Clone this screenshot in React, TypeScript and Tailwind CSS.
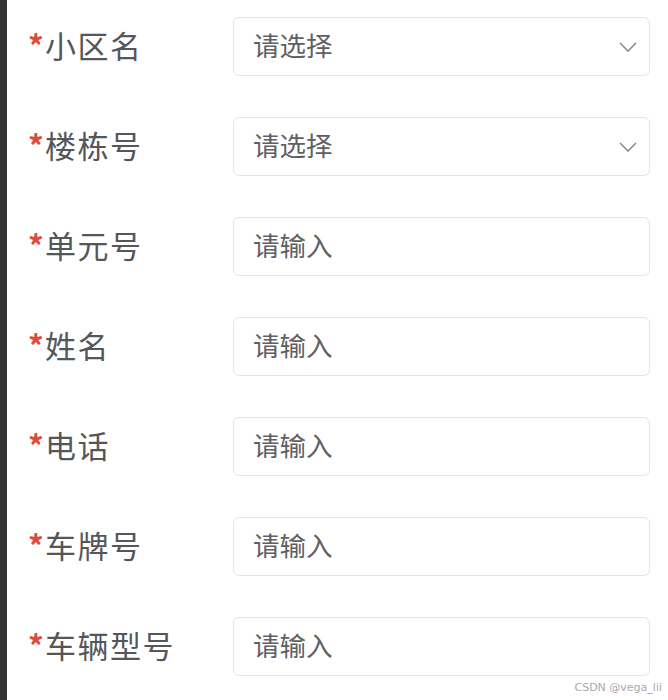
import React from "react";

const rows: { label: string; placeholder: string; select: boolean }[] = [
  { label: "小区名", placeholder: "请选择", select: true },
  { label: "楼栋号", placeholder: "请选择", select: true },
  { label: "单元号", placeholder: "请输入", select: false },
  { label: "姓名", placeholder: "请输入", select: false },
  { label: "电话", placeholder: "请输入", select: false },
  { label: "车牌号", placeholder: "请输入", select: false },
  { label: "车辆型号", placeholder: "请输入", select: false },
];

export default function App() {
  return (
    <div
      className="relative flex w-[668px] h-[700px] bg-white overflow-hidden"
      style={{ fontFamily: '"Noto Sans CJK SC", "Noto Sans", sans-serif' }}
    >
      <div className="w-[7px] h-full bg-[#333333] shrink-0" />
      <div className="flex flex-col gap-[41px] pt-[17px] pl-[21px]">
        {rows.map((r) => (
          <div key={r.label} className="flex items-center h-[59px]">
            <div className="w-[205px] flex items-center text-[31px] text-[#55565a] leading-none pb-[4px]">
              <span className="text-[#dc4b40] w-[17px] font-bold">*</span>
              <span className="tracking-[1.5px]">{r.label}</span>
            </div>
            <div className="w-[417px] h-[59px] border border-[#e3e5e9] rounded-[6px] flex items-center justify-between pl-[19px] pr-[12px]">
              <span className="text-[26.5px] text-[#5f6064] leading-none pb-[2px]">{r.placeholder}</span>
              {r.select && (
                <svg width="18" height="10" viewBox="0 0 18 10" fill="none">
                  <path d="M1 1 L9 9 L17 1" stroke="#8a8b8f" strokeWidth="1.6" />
                </svg>
              )}
            </div>
          </div>
        ))}
      </div>
      <div
        className="absolute right-[6px] bottom-[4px] text-[11px] text-[#a9a9a9]"
        style={{ fontFamily: '"DejaVu Sans", sans-serif' }}
      >
        CSDN @vega_lii
      </div>
    </div>
  );
}
